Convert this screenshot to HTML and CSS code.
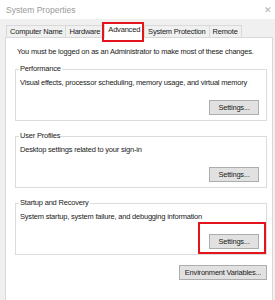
FILE: index.html
```html
<!DOCTYPE html>
<html lang="en">
<head>
    <meta charset="UTF-8">
    <title>System Properties</title>
    <link rel="stylesheet" href="styles.css">
</head>
<body>
    <div class="window">
        <div class="titlebar">
            <span class="title">System Properties</span>
            <span class="close">&#x2715;</span>
        </div>
        <div class="content">
            <div class="tabs">
                <div class="tab">Computer Name</div>
                <div class="tab">Hardware</div>
                <div class="tab active">Advanced</div>
                <div class="tab">System Protection</div>
                <div class="tab">Remote</div>
                <div class="mark mark-tab"></div>
            </div>
            <div class="panel">
                <p class="intro">You must be logged on as an Administrator to make most of these changes.</p>

                <fieldset class="group">
                    <legend>Performance</legend>
                    <p>Visual effects, processor scheduling, memory usage, and virtual memory</p>
                    <div class="actions"><button>Settings...</button></div>
                </fieldset>

                <fieldset class="group">
                    <legend>User Profiles</legend>
                    <p>Desktop settings related to your sign-in</p>
                    <div class="actions"><button>Settings...</button></div>
                </fieldset>

                <fieldset class="group">
                    <legend>Startup and Recovery</legend>
                    <p>System startup, system failure, and debugging information</p>
                    <div class="actions marked">
                        <button>Settings...</button>
                        <div class="mark mark-btn"></div>
                    </div>
                </fieldset>

                <div class="footer"><button class="wide">Environment Variables...</button></div>
            </div>
        </div>
    </div>
</body>
</html>
```

FILE: styles.css
```css
body {
    margin: 0;
    background-color: #ffffff;
    font-family: "Liberation Sans", Arial, sans-serif;
    font-size: 7.5px;
    letter-spacing: -0.2px;
    color: #222222;
}
.window {
    width: 275px;
    height: 300px;
    background-color: #f0f0f0;
    overflow: hidden;
}
.titlebar {
    height: 19px;
    background-color: #ffffff;
    display: flex;
    align-items: center;
    justify-content: space-between;
    padding: 0 3px 0 6px;
}
.title {
    font-size: 8.5px;
    letter-spacing: 0;
    color: #9a9a9a;
}
.close {
    font-size: 9px;
    color: #b0b0b0;
}
.content {
    padding: 6px 2px 0 5px;
}
.tabs {
    position: relative;
    display: flex;
    align-items: flex-end;
    height: 12px;
    padding-left: 1px;
}
.tab {
    height: 11px;
    line-height: 11px;
    padding: 0 3px;
    border: 1px solid #d9d9d9;
    border-bottom: none;
    margin-right: -1px;
    background-color: #f0f0f0;
    white-space: nowrap;
}
.tab.active {
    height: 14px;
    line-height: 12px;
    margin: 0 0 -1px 1px;
    padding: 0 3px;
    background-color: #ffffff;
    position: relative;
    z-index: 1;
}
.mark {
    position: absolute;
    border: 2px solid #e4141c;
    z-index: 2;
}
.mark-tab {
    left: 97px;
    top: -3px;
    width: 38px;
    height: 16px;
}
.panel {
    background-color: #ffffff;
    border: 1px solid #d9d9d9;
    height: 262px;
    padding: 0 5px 0 9px;
}
p {
    margin: 0;
    white-space: nowrap;
}
.intro {
    margin: 9px 0 8px 2px;
}
.group {
    margin: 0 0 10px 0;
    padding: 4px 7px 1px 4px;
    border: 1px solid #dcdcdc;
    height: 57px;
    box-sizing: border-box;
}
.group legend {
    padding: 0 1px;
    margin-left: -1px;
    line-height: 10px;
}
.actions {
    position: relative;
    display: flex;
    justify-content: flex-end;
    margin-top: 13px;
}
button {
    font-family: "Liberation Sans", Arial, sans-serif;
    font-size: 7.5px;
    letter-spacing: -0.2px;
    color: #222222;
    width: 50px;
    height: 15px;
    padding: 0;
    background-color: #e1e1e1;
    border: 1px solid #adadad;
    white-space: nowrap;
}
.mark-btn {
    right: -7px;
    top: -12px;
    width: 64px;
    height: 28px;
}
.footer {
    display: flex;
    justify-content: flex-end;
    margin-top: 3px;
}
.wide {
    width: 88px;
}
```
